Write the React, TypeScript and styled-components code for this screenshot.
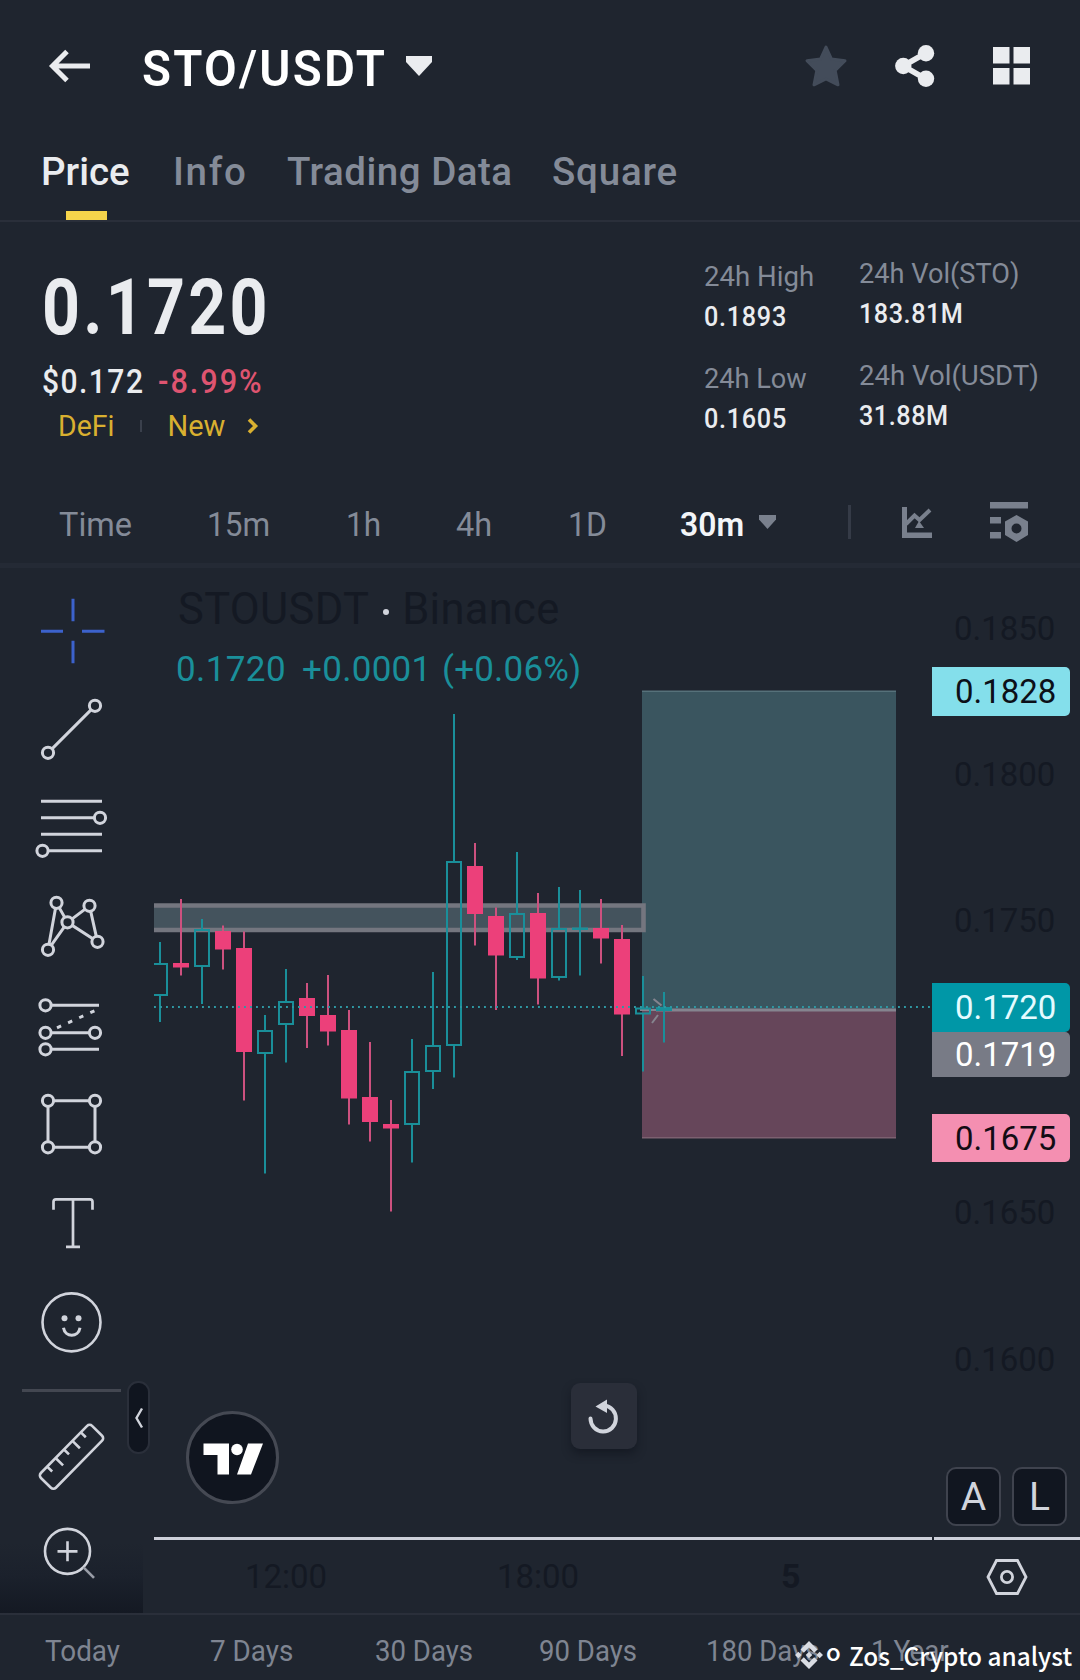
import React from "react";
import styled, { createGlobalStyle } from "styled-components";

const c = {
  bg: "#1f252f",
  text: "#eaecef",
  muted: "#848b98",
  line: "#2a2f3a",
  gold: "#d9b030",
  red: "#de5470",
  teal: "#1a8f9a",
  pink: "#ec407a",
  icon: "#d1d4dc",
  dim: "#141923",
  border: "#3f434e",
};

const GlobalStyle = createGlobalStyle`
  * { box-sizing: border-box; }
  body { margin: 0; background: ${c.bg}; }
`;

const Screen = styled.div`
  width: 1080px;
  height: 1680px;
  overflow: hidden;
  display: flex;
  flex-direction: column;
  background: ${c.bg};
  color: ${c.text};
  font-family: Roboto, "Liberation Sans", sans-serif;
`;

interface LabelProps {
  $size: number;
  $weight?: number;
  $color?: string;
  $track?: number;
  $fit?: number;
}

const Label = styled.span<LabelProps>`
  display: inline-block;
  white-space: pre;
  font-size: ${(p) => p.$size}px;
  font-weight: ${(p) => p.$weight ?? 400};
  color: ${(p) => p.$color ?? "inherit"};
  letter-spacing: ${(p) => p.$track ?? 0}px;
  transform: ${(p) => (p.$fit ? `scaleX(${p.$fit})` : "none")};
  transform-origin: left center;
`;

/* ---------- header ---------- */

const Header = styled.header`
  display: flex;
  align-items: center;
  height: 132px;
  padding: 0 50px 0 48px;
`;

const Title = styled.h1`
  margin: 0 0 0 51px;
  width: 264px;
  font-weight: 500;
  font-size: 50px;
  line-height: 60px;
  padding-top: 5px;
`;

const HeaderActions = styled.div`
  margin-left: auto;
  display: flex;
  align-items: center;
`;

const StarIcon = styled.svg`
  margin-right: 47px;
`;
const ShareIcon = styled.svg`
  margin-right: 58px;
`;

const Tabs = styled.nav`
  display: grid;
  grid-template-columns: 132px 114px 265px 1fr;
  height: 90px;
  padding-left: 41px;
  border-bottom: 2px solid ${c.line};
`;

const Tab = styled.div<{ $active?: boolean }>`
  position: relative;
  line-height: 80px;
  color: ${(p) => (p.$active ? c.text : c.muted)};
  &::after {
    content: "";
    display: ${(p) => (p.$active ? "block" : "none")};
    position: absolute;
    left: 25px;
    bottom: 0;
    width: 41px;
    height: 9px;
    background: #f5d44b;
  }
`;

/* ---------- summary ---------- */

const Summary = styled.section`
  display: flex;
  justify-content: space-between;
  height: 234px;
`;

const PriceBlock = styled.div`
  display: flex;
  flex-direction: column;
  padding: 42px 0 0 42px;
`;

const BigPrice = styled.div`
  height: 86px;
  line-height: 88px;
`;

const ChangeRow = styled.div`
  display: grid;
  grid-template-columns: 116px auto;
  height: 64px;
  line-height: 64px;
`;

const TagRow = styled.div`
  display: flex;
  align-items: center;
  height: 23px;
  line-height: 24px;
  padding-left: 16px;
`;

const TagDivider = styled.i`
  width: 2px;
  height: 12px;
  margin: 0 26px 0 24px;
  background: #3a404c;
`;

const TagArrow = styled.svg`
  margin-left: 22px;
`;

const Stats = styled.dl`
  display: grid;
  grid-template-columns: 155px 221px;
  margin: 0;
`;

const StatColumn = styled.div<{ $top: number }>`
  display: flex;
  flex-direction: column;
  padding-top: ${(p) => p.$top}px;
`;

const Stat = styled.div`
  height: 102px;
  dt,
  dd {
    margin: 0;
    height: 40px;
    line-height: 40px;
  }
`;

/* ---------- timeframes ---------- */

const Frames = styled.nav`
  display: grid;
  grid-template-columns: 148px 139px 110px 112px 112px 79px 89px 54px 88px auto;
  align-items: center;
  height: 112px;
  padding: 31px 0 0 59px;
  color: ${c.muted};
  border-bottom: 5px solid #242a35;
`;

const FrameDivider = styled.i`
  width: 3px;
  height: 34px;
  margin-top: -6px;
  background: #353b47;
`;

const FrameIcon = styled.svg`
  margin-top: -6px;
`;

/* ---------- chart ---------- */

const ChartArea = styled.main`
  position: relative;
  display: flex;
  height: 1045px;
`;

const Rail = styled.aside`
  width: 143px;
  padding-top: 14px;
  overflow: hidden;
  background: linear-gradient(to bottom, transparent 975px, #1b212c 1008px, #141923 1045px);
`;

const ToolIcon = styled.svg`
  display: block;
  fill: none;
  stroke: ${c.icon};
  stroke-width: 3;
`;

const RailDivider = styled.hr`
  width: 99px;
  height: 3px;
  border: 0;
  margin: 17px 0 15px 22px;
  background: #434751;
`;

const Collapse = styled.button`
  position: absolute;
  left: 127px;
  top: 813px;
  width: 23px;
  height: 73px;
  padding: 0;
  display: grid;
  place-items: center;
  border: 2px solid #2a2f3a;
  border-radius: 11px;
  background: #10151f;
`;

const Board = styled.div`
  display: grid;
  grid-template-columns: 778px 148px;
  grid-template-rows: 969px 3px 1fr;
  margin-left: 11px;
  flex: 1;
`;

const Pane = styled.div`
  position: relative;
`;

const PlotSvg = styled.svg`
  display: block;
`;

const Legend = styled.div`
  position: absolute;
  left: 22px;
  top: 1px;
`;

const LegendTitle = styled.div`
  display: flex;
  align-items: center;
  height: 81px;
  line-height: 83px;
  padding-left: 2px;
  i {
    width: 6px;
    height: 6px;
    border-radius: 3px;
    margin: 4px 13px 0 14px;
    background: ${c.icon};
  }
`;

const LegendValues = styled.div`
  display: grid;
  grid-template-columns: 126px 140px auto;
  line-height: 40px;
`;

const Badge = styled.div`
  position: absolute;
  left: 32px;
  top: 843px;
  width: 93px;
  height: 93px;
  border-radius: 50%;
  border: 3px solid #454953;
  background: #10151f;
`;

const Reset = styled.button`
  position: absolute;
  left: 417px;
  top: 815px;
  width: 66px;
  height: 66px;
  padding: 0;
  border: 0;
  border-radius: 9px;
  background: #2a2e39;
  box-shadow: 0 5px 9px rgba(14, 18, 28, 0.55);
`;

const PriceScale = styled.div`
  position: relative;
`;

const Tick = styled.div`
  position: absolute;
  left: 22px;
  height: 40px;
  line-height: 40px;
  margin-top: -20px;
`;

const PriceTag = styled.div<{ $bg: string; $ink: string; $h: number }>`
  position: absolute;
  left: 0;
  width: 138px;
  height: ${(p) => p.$h}px;
  line-height: ${(p) => p.$h}px;
  padding-left: 23px;
  border-radius: 0 5px 5px 0;
  background: ${(p) => p.$bg};
  color: ${(p) => p.$ink};
`;

const ScaleModes = styled.div`
  position: absolute;
  right: 13px;
  bottom: 11px;
  display: flex;
  gap: 11px;
`;

const ModeButton = styled.button`
  width: 55px;
  height: 59px;
  padding: 0;
  border: 2px solid ${c.border};
  border-radius: 10px;
  background: #111620;
  color: ${c.icon};
  font: 400 39px/52px Roboto, sans-serif;
`;

const AxisLine = styled.div<{ $gap?: boolean }>`
  background: #cdd0da;
  margin-left: ${(p) => (p.$gap ? 2 : 0)}px;
`;

const TimeAxis = styled.div`
  display: grid;
  grid-template-columns: 252px 284px auto;
  padding-left: 91px;
  line-height: 73px;
  color: ${c.dim};
`;

const AxisSettings = styled.div`
  display: grid;
  place-items: center;
  padding-left: 2px;
`;

/* ---------- footer ---------- */

const Ranges = styled.footer`
  position: relative;
  display: grid;
  grid-template-columns: 165px 165px 164px 167px 165px auto;
  height: 67px;
  line-height: 72px;
  padding-left: 45px;
  color: #7f8592;
  border-top: 2px solid ${c.line};
`;

const Watermark = styled.div`
  position: absolute;
  left: 795px;
  top: 12px;
  display: flex;
  align-items: center;
  height: 56px;
  line-height: 56px;
  color: #fff;
  font-family: "Noto Sans CJK SC", "Noto Sans", sans-serif;
`;

const WatermarkDot = styled.span`
  width: 23px;
  margin-left: 3px;
  margin-top: -6px;
`;

/* ---------- data ---------- */

type Candle = [number, number, number, number, number, 0 | 1];

// x, high, body top, body bottom, low, rising
const candles: Candle[] = [
  [160, 942, 963, 996, 1022, 1],
  [181, 899, 963, 967.5, 975.5, 0],
  [202, 919, 929, 967, 1004, 1],
  [223, 925.5, 931, 949.5, 969.5, 0],
  [244, 931.5, 948, 1052, 1100.5, 0],
  [265, 1015, 1030, 1054, 1173.5, 1],
  [286, 969, 1001, 1025, 1062.5, 1],
  [307, 983, 998, 1016, 1048, 0],
  [328, 975, 1015, 1031.5, 1045.5, 0],
  [349, 1010, 1030, 1098.5, 1124.5, 0],
  [370, 1042, 1097, 1122, 1141.5, 0],
  [391, 1100, 1124, 1128.5, 1211.5, 0],
  [412, 1039, 1071, 1125, 1162.5, 1],
  [433, 972, 1045, 1072, 1089, 1],
  [454, 714, 861, 1046, 1077.5, 1],
  [475, 843, 866, 914, 945.5, 0],
  [496, 907.5, 916, 955.5, 1010, 0],
  [517, 852, 913, 958, 960, 1],
  [538, 893, 913, 978.5, 1004.5, 0],
  [559, 887, 928, 978, 980.5, 1],
  [580, 890, 927.5, 929.5, 975.5, 1],
  [601, 899, 928, 938.5, 963.5, 0],
  [622, 925, 939, 1014.5, 1056, 0],
  [643, 976, 1007.5, 1014.5, 1071.5, 1],
  [664, 992, 1007, 1011, 1042.5, 1],
];

const CandleShape = ({ d }: { d: Candle }) => {
  const [x, high, top, bottom, low, up] = d;
  if (!up) {
    return (
      <g fill={c.pink}>
        <rect x={x - 1} y={high} width={2} height={low - high} fill="#cd517f" />
        <rect x={x - 8} y={top} width={16} height={bottom - top} />
      </g>
    );
  }
  const h = Math.max(bottom - top - 2, 0.5);
  return (
    <g stroke={c.teal} strokeWidth={2} fill="none">
      <path d={`M${x} ${high}V${top + 1}M${x} ${bottom - 1}V${low}`} />
      <rect x={x - 7} y={top + 1} width={14} height={h} />
    </g>
  );
};

const priceY = (price: number) => 60 + (0.185 - price) * 29220;

const Dot = ({ x, y }: { x: number; y: number }) => <circle cx={x} cy={y} r={5.6} fill={c.bg} />;

const tools: React.ReactNode[] = [
  <path key="cross" stroke="#3c62cc" d="M1.5-32.5V-10M1.5 9.5V32M-30.5 0H-8.5M10.5 0H33" />,
  <>
    <path d="M23.5-24.5L-23.5 22.5" />
    <Dot x={23.5} y={-24.5} />
    <Dot x={-23.5} y={22.5} />
  </>,
  <>
    <path d="M-30.5-27H30.5M-30.5-10.5H28M-30.5 6H30.5M-29 22.5H30.5" />
    <Dot x={28.5} y={-10.5} />
    <Dot x={-29} y={22.5} />
  </>,
  <>
    <path d="M-15-24.5L-23.5 22.5L-4-5ZM-4-5L18-21.5L26 14.5Z" />
    <Dot x={-15} y={-24.5} />
    <Dot x={18} y={-21.5} />
    <Dot x={-4} y={-5} />
    <Dot x={26} y={14.5} />
    <Dot x={-23.5} y={22.5} />
  </>,
  <>
    <path d="M-26-21H27.5M-26 6.5H23.5M-26 23H27.5" />
    <path d="M-14.5 1.5L24-16" strokeDasharray="4.5 7.7" />
    <Dot x={-26} y={-21} />
    <Dot x={-26} y={6.5} />
    <Dot x={23.5} y={6.5} />
    <Dot x={-26} y={23} />
  </>,
  <>
    <path d="M-23.5-23.5H23.5V23H-23.5Z" />
    <Dot x={-23.5} y={-23.5} />
    <Dot x={23.5} y={-23.5} />
    <Dot x={-23.5} y={23} />
    <Dot x={23.5} y={23} />
  </>,
  <path
    key="text"
    strokeWidth={2.7}
    d="M-18-13.500V-21.500Q-18-24-15.500-24H18.500Q21-24 21-21.500V-13.500M1.500-24V23.500M-5.500 23.500H8.500"
  />,
  <>
    <circle r={29} strokeWidth={2.6} />
    <circle cx={-7} cy={-4} r={3} fill={c.icon} stroke="none" />
    <circle cx={7} cy={-4} r={3} fill={c.icon} stroke="none" />
    <path d="M-8 5.5C-6.5 15.5 7 15.5 8.5 5.5" />
  </>,
];

const Tool = ({ children }: { children: React.ReactNode }) => (
  <ToolIcon width={143} height={98.7} viewBox="-71.5 -49.35 143 98.7">
    {children}
  </ToolIcon>
);

const priceTicks = [0.185, 0.18, 0.175, 0.165, 0.16];

const priceTags = [
  { text: "0.1828", top: 99, h: 49, bg: "#84dfeb", ink: "#0c1018" },
  { text: "0.1720", top: 415, h: 49, bg: "#0097a7", ink: "#e4fbff" },
  { text: "0.1719", top: 464, h: 45, bg: "#787b86", ink: "#ffffff" },
  { text: "0.1675", top: 546, h: 48, bg: "#f48fb1", ink: "#130c14" },
];

const CandleChart = () => (
  <PlotSvg width={778} height={969} viewBox="154 568 778 969">
    <rect x={642} y={691} width={254} height={319} fill="#3a555f" />
    <rect x={642} y={690.5} width={254} height={1.5} fill="#56717a" />
    <rect x={642} y={1010} width={254} height={128} fill="#66465a" />
    <rect x={642} y={1137} width={254} height={1.5} fill="#7c6070" />
    <rect x={656} y={1008.5} width={240} height={3} fill="#85848f" />
    <path d="M150 905.5H643.5V930H150Z" fill="#44535d" stroke="#74767f" strokeWidth={4.6} />
    <path d="M653.5 999L661.5 1005.5M652 1023L658 1015M640 1010H657" stroke="#85848f" strokeWidth={2} />
    {candles.map((d) => (
      <CandleShape key={d[0]} d={d} />
    ))}
    <path d="M656 1008.5H672V1010.5H656Z" fill={c.teal} />
    <path d="M154 1007H932" stroke="#2f98a3" strokeWidth={1.9} strokeDasharray="1.9 4.1" />
  </PlotSvg>
);

export default function App() {
  return (
    <Screen>
      <GlobalStyle />
      <Header>
        <svg width={43} height={40} viewBox="0 0 43 40" fill="none" stroke={c.text} strokeWidth={5}>
          <path d="M19 5.5L4.5 20L19 34.5M5 20H42" />
        </svg>
        <Title>
          <Label $size={50.5} $weight={600} $color="#fff" $track={2.4} $fit={0.94}>STO/USDT</Label>
        </Title>
        <svg width={26} height={20} viewBox="0 0 26 20">
          <path d="M0 0H26V6L13 20L0 6Z" fill={c.text} />
        </svg>
        <HeaderActions>
          <StarIcon width={44} height={44} viewBox="0 0 44 44">
            <path
              d="M22 3L27.5 15L41 16.8L31.2 26.5L34 40.8L22 35L10 40.8L12.8 26.5L3 16.8L16.5 15Z"
              fill="#434c5a"
              stroke="#434c5a"
              strokeWidth={3}
              strokeLinejoin="round"
            />
          </StarIcon>
          <ShareIcon width={40} height={42} viewBox="0 0 40 42" fill={c.text}>
            <path d="M31 8L8 21L31 34" fill="none" stroke={c.text} strokeWidth={5.5} />
            <circle cx={31} cy={8.3} r={8.2} />
            <circle cx={8.3} cy={21} r={8.2} />
            <circle cx={31} cy={33.7} r={8.2} />
          </ShareIcon>
          <svg width={37} height={38} viewBox="0 0 37 38" fill={c.text}>
            <path d="M0 0H16.500V16.500H0ZM20.500 0H37V16.500H20.500ZM0 21H16.500V37.500H0ZM20.500 21H37V37.500H20.500Z" />
          </svg>
        </HeaderActions>
      </Header>

      <Tabs>
        <Tab $active>
          <Label $size={38.5} $weight={500}>Price</Label>
        </Tab>
        <Tab>
          <Label $size={38.5} $weight={500} $track={1.7}>Info</Label>
        </Tab>
        <Tab>
          <Label $size={38.5} $weight={500} $track={0.5}>Trading Data</Label>
        </Tab>
        <Tab>
          <Label $size={38.5} $weight={500} $track={0.8}>Square</Label>
        </Tab>
      </Tabs>

      <Summary>
        <PriceBlock>
          <BigPrice>
            <Label $size={78} $weight={700} $fit={0.85} $track={3.8}>0.1720</Label>
          </BigPrice>
          <ChangeRow>
            <Label $size={33} $weight={500} $fit={0.91} $track={1.6}>$0.172</Label>
            <Label $size={33} $weight={500} $color={c.red} $track={2.1} $fit={0.93}>-8.99%</Label>
          </ChangeRow>
          <TagRow>
            <Label $size={29} $color={c.gold} $fit={0.98}>DeFi</Label>
            <TagDivider />
            <Label $size={29} $color={c.gold}>New</Label>
            <TagArrow width={12} height={16} viewBox="0 0 12 16" fill="none" stroke={c.gold} strokeWidth={3.6}>
              <path d="M2 1.5L8.5 8L2 14.5" />
            </TagArrow>
          </TagRow>
        </PriceBlock>
        <Stats>
          <StatColumn $top={35}>
            <Stat>
              <dt><Label $size={28} $color={c.muted} $fit={0.985}>24h High</Label></dt>
              <dd><Label $size={28} $weight={500} $fit={0.9} $track={0.8}>0.1893</Label></dd>
            </Stat>
            <Stat>
              <dt><Label $size={28} $color={c.muted} $fit={0.97}>24h Low</Label></dt>
              <dd><Label $size={28} $weight={500} $fit={0.9} $track={0.8}>0.1605</Label></dd>
            </Stat>
          </StatColumn>
          <StatColumn $top={32}>
            <Stat>
              <dt><Label $size={28} $color={c.muted} $fit={0.97}>24h Vol(STO)</Label></dt>
              <dd><Label $size={28} $weight={500} $fit={0.9} $track={0.6}>183.81M</Label></dd>
            </Stat>
            <Stat>
              <dt><Label $size={28} $color={c.muted} $fit={0.985}>24h Vol(USDT)</Label></dt>
              <dd><Label $size={28} $weight={500} $fit={0.9} $track={0.6}>31.88M</Label></dd>
            </Stat>
          </StatColumn>
        </Stats>
      </Summary>

      <Frames>
        <Label $size={32.5}>Time</Label>
        <Label $size={32.5} $fit={0.97}>15m</Label>
        <Label $size={32.5} $fit={0.97}>1h</Label>
        <Label $size={32.5}>4h</Label>
        <Label $size={32.5} $fit={0.98}>1D</Label>
        <Label $size={32.5} $weight={600} $color="#f3f5f8" $fit={0.98}>30m</Label>
        <FrameIcon width={17} height={14} viewBox="0 0 17 14">
          <path d="M0 0H17V4.500L8.500 14L0 4.500Z" fill="#79808d" />
        </FrameIcon>
        <FrameDivider />
        <FrameIcon width={30} height={31} viewBox="0 0 30 31">
          <path d="M0 0H5V25.500H30V31H0Z" fill="#79808d" />
          <path d="M4 17L12.500 8.500L17.500 13L28 3" fill="none" stroke="#79808d" strokeWidth={4} />
          <path d="M17 14L22 21H13Z" fill="#79808d" />
        </FrameIcon>
        <FrameIcon width={38} height={40} viewBox="0 0 38 40" fill="#79808d">
          <path d="M0 0H38V6.500H0ZM0 15H11V21.500H0ZM0 30H11V36.500H0Z" />
          <path fillRule="evenodd" d="M26.500 13L38 19.500V33L26.500 40L15 33V19.500ZM26.500 21.500A5 5 0 1 0 26.500 31.500A5 5 0 1 0 26.500 21.500Z" />
        </FrameIcon>
      </Frames>

      <ChartArea>
        <Rail>
          {tools.map((tool, i) => (
            <Tool key={i}>{tool}</Tool>
          ))}
          <RailDivider />
          <Tool>
            <g strokeWidth={2.6} transform="translate(0 .5) rotate(-45.5)">
              <rect x={-36.5} y={-10.5} width={73} height={21} rx={3.5} />
              <path d="M-24-10.500V-3.500M-12-10.500V0M0-10.500V-3.500M12-10.500V0M24-10.500V-3.500" />
            </g>
          </Tool>
          <Tool>
            <g strokeWidth={2.6}>
              <circle cx={-4} cy={-3} r={22.5} />
              <path d="M-14-3H6M-4-13V7" />
              <path d="M12 13L22.500 23.500" stroke="#999da7" />
            </g>
          </Tool>
        </Rail>

        <Board>
          <Pane>
            <CandleChart />
            <Legend>
              <LegendTitle>
                <Label $size={43.5} $color={c.dim} $track={0.3}>STOUSDT</Label>
                <i />
                <Label $size={43.5} $color={c.dim} $track={0.3}>Binance</Label>
              </LegendTitle>
              <LegendValues>
                <Label $size={35} $color={c.teal} $track={0.4}>0.1720</Label>
                <Label $size={35} $color={c.teal} $track={0.3}>+0.0001</Label>
                <Label $size={35} $color={c.teal} $track={0.2}>(+0.06%)</Label>
              </LegendValues>
            </Legend>
            <Badge>
              <svg width={87} height={87} viewBox="189 1414 87 87" fill="#fff">
                <path d="M203.500 1443.500H229V1474.500H217.500V1455H203.500ZM248 1443.500H263L251 1474.500H237Z" />
                <circle cx={237} cy={1449.5} r={5.8} />
              </svg>
            </Badge>
            <Reset>
              <svg width={66} height={66} viewBox="0 0 66 66">
                <path d="M19.500 35.500A12.700 13 0 1 0 33 22.500" fill="none" stroke={c.icon} strokeWidth={4} strokeLinecap="round" />
                <path d="M24.500 23.500L36 16.500V30Z" fill={c.icon} />
              </svg>
            </Reset>
          </Pane>
          <PriceScale>
            {priceTicks.map((p) => (
              <Tick key={p} style={{ top: priceY(p) }}>
                <Label $size={34} $color={c.dim} $fit={0.97}>{p.toFixed(4)}</Label>
              </Tick>
            ))}
            {priceTags.map((t) => (
              <PriceTag key={t.text} $bg={t.bg} $ink={t.ink} $h={t.h} style={{ top: t.top }}>
                <Label $size={34} $fit={0.97}>{t.text}</Label>
              </PriceTag>
            ))}
            <ScaleModes>
              <ModeButton>A</ModeButton>
              <ModeButton>L</ModeButton>
            </ScaleModes>
          </PriceScale>
          <AxisLine />
          <AxisLine $gap />
          <TimeAxis>
            <Label $size={34} $fit={0.97}>12:00</Label>
            <Label $size={34} $fit={0.97}>18:00</Label>
            <Label $size={34} $weight={700}>5</Label>
          </TimeAxis>
          <AxisSettings>
            <svg width={44} height={40} viewBox="-22 -20 44 40" fill="none" stroke={c.icon} strokeWidth={2.8}>
              <path d="M-10.500-16.500H10.500L19 0L10.500 16.500H-10.500L-19 0Z" />
              <circle r={5.6} />
            </svg>
          </AxisSettings>
        </Board>

        <Collapse>
          <svg width={10} height={24} viewBox="0 0 10 24" fill="none" stroke={c.icon} strokeWidth={2.4}>
            <path d="M8 2.5L2.5 12L8 21.5" />
          </svg>
        </Collapse>
      </ChartArea>

      <Ranges>
        <Label $size={29} $fit={0.96}>Today</Label>
        <Label $size={29} $fit={0.96}>7 Days</Label>
        <Label $size={29} $fit={0.95}>30 Days</Label>
        <Label $size={29} $fit={0.95}>90 Days</Label>
        <Label $size={29} $fit={0.95}>180 Days</Label>
        <Label $size={29} $fit={0.96}>1 Year</Label>
        <Watermark>
          <svg width={28} height={28} viewBox="-14 -14 28 28" fill="#d9dce3">
            <path d="M0-14L8.500-5.500L5.200-2.200L0-7.400L-5.200-2.200L-8.500-5.500ZM0 14L8.500 5.500L5.200 2.200L0 7.400L-5.200 2.200L-8.500 5.500Z" />
            <path d="M0-3.300L3.300 0L0 3.300L-3.300 0ZM-10.700-3.300L-7.400 0L-10.700 3.300L-14 0ZM10.700-3.300L14 0L10.700 3.300L7.400 0Z" />
          </svg>
          <WatermarkDot>
            <Label $size={24} $weight={500}>o</Label>
          </WatermarkDot>
          <Label $size={25} $weight={500} $fit={0.975}>Zos_Crypto analyst</Label>
        </Watermark>
      </Ranges>
    </Screen>
  );
}
